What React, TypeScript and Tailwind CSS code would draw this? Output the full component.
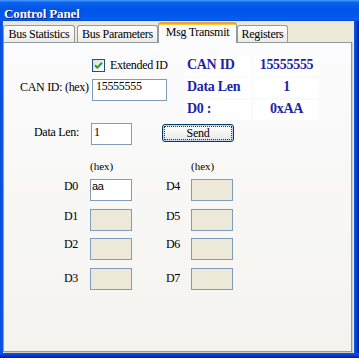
import React from "react";

const serif = "font-['Liberation_Serif','Times_New_Roman',serif]";

const tabs = [
  { label: "Bus Statistics", width: "w-[72px]" },
  { label: "Bus Parameters", width: "w-[81px]" },
  { label: "Msg Transmit", width: "w-[79px]", active: true },
  { label: "Registers", width: "w-[51px]" },
];

const info = [
  ["CAN ID", "15555555"],
  ["Data Len", "1"],
  ["D0 :", "0xAA"],
];

// label top offsets differ a bit per row in the original form
const rows = [
  { a: "D0", b: "D4", top: "mt-0", value: "aa", gap: "mt-[6px]" },
  { a: "D1", b: "D5", top: "mt-0", gap: "mt-[8px]" },
  { a: "D2", b: "D6", top: "-mt-[1px]", gap: "mt-[7px]" },
  { a: "D3", b: "D7", top: "mt-[3px]", gap: "mt-[8px]" },
];

const Checkbox = () => (
  <svg width="13" height="13" viewBox="0 0 13 13" className="shrink-0">
    <defs>
      <linearGradient id="cb" x1="0" y1="0" x2="1" y2="1">
        <stop offset="0" stopColor="#DCDCD7" />
        <stop offset="1" stopColor="#FFFFFF" />
      </linearGradient>
    </defs>
    <rect x="0.5" y="0.5" width="12" height="12" fill="url(#cb)" stroke="#1C5180" />
    <path d="M3 6.2 L5.3 8.6 L10 3.8" fill="none" stroke="#21A121" strokeWidth="2" />
  </svg>
);

const ByteBox = (props: { value?: string }) => (
  <div
    className={`h-[22px] w-[42px] shrink-0 border border-[#7F9DB9] pl-[1px] font-['Liberation_Sans',Arial,sans-serif] text-[11px] leading-[12px] text-black ${
      props.value ? "bg-white" : "bg-[#ECE9D8]"
    }`}
  >
    {props.value}
  </div>
);

const App = () => {
  return (
    <div className={`flex h-[358px] w-[359px] flex-col bg-[#0846D8] ${serif}`}>
      {/* title bar */}
      <div className="h-[21px] shrink-0 bg-[linear-gradient(180deg,#4A9BFF_0%,#0A62EC_12%,#0055E6_45%,#0058EE_80%,#0A60EC_92%,#0046D4_100%)] pl-[4px] pt-[6px] text-[13px] font-bold leading-[16px] tracking-[-0.01em] text-white [text-shadow:1px_1px_0_#0A1883]">
        Control Panel
      </div>
      <div className="flex flex-1">
        <div className="w-[3px] bg-[linear-gradient(90deg,#0A4CDB,#0A5BE8)]" />
        <div className="flex flex-1 flex-col bg-[#ECE9D8] pt-[1px]">
          {/* tabs */}
          <div className="flex h-[20px] items-end text-[12px] tracking-tight text-black">
            {tabs.map((t, i) =>
              t.active ? (
                <div
                  key={t.label}
                  className={`relative z-10 -mb-px flex h-[21px] ${t.width} justify-center rounded-t-[3px] border-x border-t-2 border-[#919B9C] border-t-[#E8A33A] bg-[#FCFCFE] pt-[1px] leading-[15px] shadow-[inset_0_1px_0_#FFC93F]`}
                >
                  {t.label}
                </div>
              ) : (
                <div
                  key={t.label}
                  className={`flex h-[17px] ${t.width} ${
                    i === 1 ? "ml-[2px]" : ""
                  } justify-center rounded-t-[3px] border-x border-t border-[#919B9C] bg-[linear-gradient(180deg,#FFFFFF,#ECEBE6)] pt-[1px] leading-[14px]`}
                >
                  {t.label}
                </div>
              )
            )}
          </div>
          {/* tab page */}
          <div className="mb-[1px] mr-[2px] flex flex-1 flex-col border border-[#919B9C] bg-[linear-gradient(180deg,#FCFCFE,#F4F3EE)] text-[12px] tracking-tight text-black shadow-[1px_1px_0_#D0CEBF]">
            <div className="flex pt-[13px]">
              <div className="w-[181px] shrink-0 pt-[3px]">
                <div className="flex items-start pl-[88px]">
                  <Checkbox />
                  <span className="ml-[5px] whitespace-nowrap leading-[13px]">Extended ID</span>
                </div>
                <div className="mt-[7px] flex items-start">
                  <div className="mt-[1px] w-[88px] shrink-0 whitespace-nowrap pl-[16px] leading-[14px]">
                    CAN ID: (hex)
                  </div>
                  <div className="h-[22px] w-[75px] border border-[#7F9DB9] bg-white pl-[3px] leading-[12px]">
                    15555555
                  </div>
                </div>
              </div>
              <div className="grid grid-cols-[66px_65px] gap-x-[3px] gap-y-[2px] text-[14px] font-bold leading-[18px] text-[#1D24A8]">
                {info.map(([k, v]) => (
                  <React.Fragment key={k}>
                    <div className="h-[20px] bg-white pl-[2px]">{k}</div>
                    <div className="h-[20px] bg-white text-center">{v}</div>
                  </React.Fragment>
                ))}
              </div>
            </div>
            <div className="mt-[3px] flex items-start">
              <div className="mt-[2px] w-[87px] shrink-0 whitespace-nowrap pl-[30px] leading-[14px]">
                Data Len:
              </div>
              <div className="h-[22px] w-[41px] border border-[#7F9DB9] bg-white pl-[2px] pt-[2px] leading-[12px]">
                1
              </div>
              <div className="ml-[30px] mt-[1px] h-[18px] w-[72px] rounded-[3px] border border-[#003C74] bg-[linear-gradient(180deg,#FFFFFF,#ECEBE6_85%,#D6D0C5)] p-[1px] shadow-[inset_0_0_0_1px_#C2D1F4]">
                <div className="flex h-full items-center justify-center border border-dotted border-[#333] leading-[12px]">
                  Send
                </div>
              </div>
            </div>
            <div className="mt-[15px] flex pl-[86px] text-[11px] leading-[13px] tracking-normal">
              <div className="w-[101px]">(hex)</div>
              <div>(hex)</div>
            </div>
            {rows.map((r) => (
              <div key={r.a} className={`${r.gap} flex items-start pl-[60px] leading-[14px]`}>
                <div className={`w-[26px] shrink-0 ${r.top}`}>{r.a}</div>
                <ByteBox value={r.value} />
                <div className={`ml-[34px] w-[25px] shrink-0 ${r.top}`}>{r.b}</div>
                <ByteBox />
              </div>
            ))}
          </div>
        </div>
        <div className="w-[5px] bg-[linear-gradient(90deg,#0A5DE6,#0046D5_40%,#001EA0)]" />
      </div>
      <div className="h-[5px] shrink-0 bg-[linear-gradient(180deg,#0A55E0,#0831D9_60%,#001A8C)]" />
    </div>
  );
};

export default App;
